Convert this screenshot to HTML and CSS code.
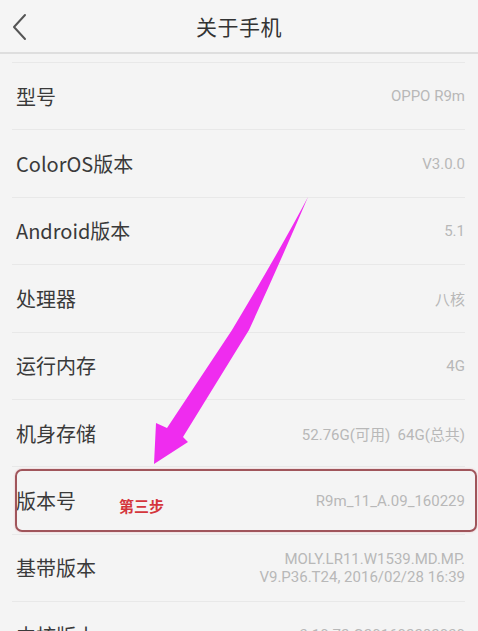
FILE: index.html
```html
<!DOCTYPE html>
<html lang="zh-CN">
<head>
<meta charset="utf-8">
<title>关于手机</title>
<link rel="stylesheet" href="styles.css">
</head>
<body>
<div class="page">
  <header class="topbar">
    <span class="back">
      <svg width="16" height="28" viewBox="0 0 16 28"><path d="M14 2 L3 14 L14 26" fill="none" stroke="#555" stroke-width="2" stroke-linecap="round" stroke-linejoin="round"/></svg>
    </span>
    <h1 class="title">关于手机</h1>
    <span></span>
  </header>
  <ul class="list">
    <li class="row"><span class="label">型号</span><span class="value">OPPO R9m</span></li>
    <li class="row"><span class="label">ColorOS版本</span><span class="value">V3.0.0</span></li>
    <li class="row"><span class="label">Android版本</span><span class="value">5.1</span></li>
    <li class="row"><span class="label">处理器</span><span class="value">八核</span></li>
    <li class="row"><span class="label">运行内存</span><span class="value">4G</span></li>
    <li class="row"><span class="label">机身存储</span><span class="value">52.76G(可用)&nbsp;&nbsp;64G(总共)</span></li>
    <li class="row marked"><span class="label">版本号</span><span class="value">R9m_11_A.09_160229</span>
      <span class="highlight"><span class="step">第三步</span></span>
    </li>
    <li class="row"><span class="label">基带版本</span><span class="value multi">MOLY.LR11.W1539.MD.MP.<br>V9.P36.T24, 2016/02/28 16:39</span></li>
    <li class="row"><span class="label">内核版本</span><span class="value">3.10.72-G201602282030</span></li>
  </ul>
  <svg class="arrow" width="478" height="631" viewBox="0 0 478 631">
    <path d="M308 197 Q282 258 249 330 L183 437 L188 442 L154 464 L156 423 L167 428 L232 330 Q280 250 308 197 Z" fill="#ef2cef"/>
  </svg>
</div>
</body>
</html>
```
FILE: styles.css
```css
html, body {
  margin: 0;
  padding: 0;
  background: #f4f4f4;
}
body {
  width: 478px;
  height: 631px;
  overflow: hidden;
  font-family: "Noto Sans CJK SC", "Noto Sans", sans-serif;
}
.page {
  position: relative;
  width: 478px;
  height: 631px;
  overflow: hidden;
}
.topbar {
  height: 52px;
  display: grid;
  grid-template-columns: 1fr auto 1fr;
  align-items: center;
  border-bottom: 2px solid #dedede;
  background: #f5f5f5;
}
.back {
  display: flex;
  align-items: center;
  padding-left: 11px;
  padding-top: 1px;
}
.title {
  margin: 0;
  font-size: 21px;
  font-weight: 400;
  color: #333;
  letter-spacing: 0.5px;
}
.list {
  list-style: none;
  margin: 8px 13px 0 12px;
  padding: 0;
  border-top: 1px solid #e8e8e8;
}
.row {
  height: 66.4px;
  border-bottom: 1px solid #e8e8e8;
  display: flex;
  align-items: center;
  justify-content: space-between;
  padding-left: 4px;
}
.label {
  font-size: 20px;
  color: #3a3a3a;
  white-space: nowrap;
}
.value {
  font-family: Roboto, "Noto Sans CJK SC", sans-serif;
  font-size: 15px;
  color: #b8b8b8;
  text-align: right;
  white-space: nowrap;
}
.value.multi {
  line-height: 18px;
  font-size: 15px;
}
.marked {
  position: relative;
}
.highlight {
  position: absolute;
  top: 2px;
  bottom: 2px;
  left: 3px;
  right: -12px;
  border: 2px solid #a0555b;
  border-radius: 7px;
  box-shadow: 0 0 2px rgba(230, 120, 130, 0.5);
}
.step {
  position: absolute;
  left: 102px;
  top: 24px;
  font-size: 15px;
  font-weight: 700;
  color: #d4363c;
}
.arrow {
  position: absolute;
  left: 0;
  top: 0;
  pointer-events: none;
}
```
